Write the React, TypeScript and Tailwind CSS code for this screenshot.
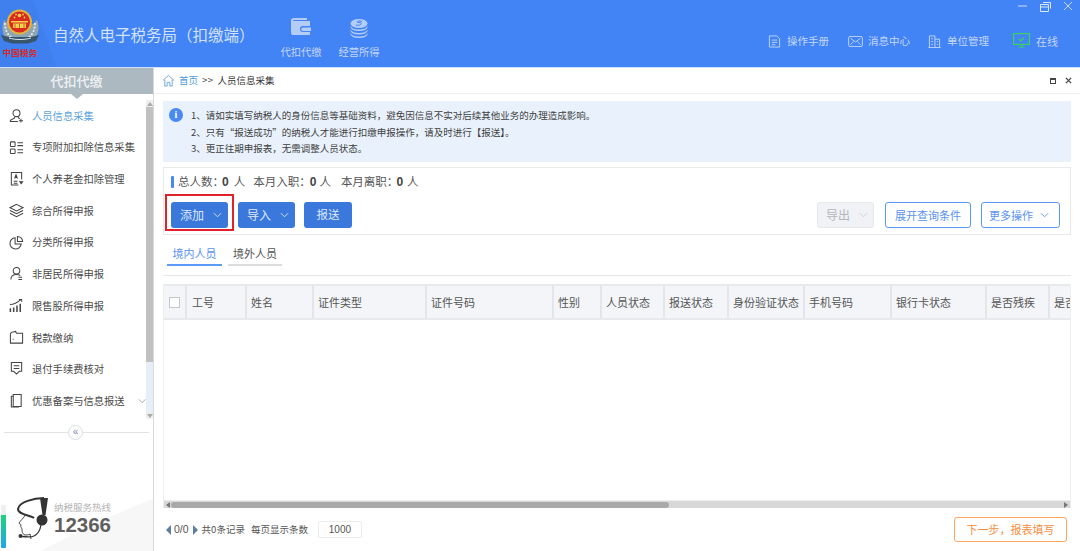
import React from "react";

const sideIcons: Record<string, React.ReactNode> = {
  user: <><circle cx="8" cy="5.500" r="3.700" /><path d="M6 9v1.500L1.500 13v1.500h8M10 9v1.500l1.500 1M10.500 13.500h4.500M12.700 11.500v4" /></>,
  list: <><rect x="1.500" y="2" width="5" height="5" rx="1" /><rect x="1.500" y="9.500" width="5" height="5" rx="1" /><path d="M9 3h6M9 6h6M9 10.500h6M9 13.500h6" /></>,
  pension: <><path d="M10 15H2.500V1.500h11V9" /><path d="M6 8l1.500-4L9 8M6.500 7h2M5 11h4M5 13h4" /><path d="M11.500 11.500l1.500 2 1.500-2z" fill="#444" /></>,
  layers: <><path d="M8 1.500l7 3.500-7 3.500L1 5z" /><path d="M1 8l7 3.500L15 8M1 11l7 3.500 7-3.500" /></>,
  pie: <><path d="M6.500 3a6 6 0 1 0 6.500 6.500H6.500z" /><path d="M9 1.500a5.500 5.500 0 0 1 5.500 5.500H9z" /></>,
  person: <><circle cx="8" cy="5" r="3.500" /><path d="M2 14.500c0-4 2.500-5.500 6-5.500 1.500 0 3 .3 4 1.200M10 14.500h4M10 12h4" /></>,
  chart: <><path d="M1.500 11v4M5 10v5M8.500 8v7M12 6v9" strokeWidth="1.600" /><path d="M1 7c4 0 8-2 12-5.500M10.500 1.500H13.500V4" /></>,
  wallet: <><path d="M1.500 14V4l1-1.500 4.500-1 1 2h6.500V14z" /><path d="M4 10h.8" /></>,
  check: <><path d="M2.500 1.500h11V11H11l-3 3-3-3H2.500z" /><path d="M5 5h6M5 8h6" /></>,
  copy: <><path d="M4.500 1.500h8.500v13H4.500z" /><path d="M4.500 3.500H2.500v11.500h8" /></>,
};

const menu: [string, string][] = [
  ["user", "人员信息采集"],
  ["list", "专项附加扣除信息采集"],
  ["pension", "个人养老金扣除管理"],
  ["layers", "综合所得申报"],
  ["pie", "分类所得申报"],
  ["person", "非居民所得申报"],
  ["chart", "限售股所得申报"],
  ["wallet", "税款缴纳"],
  ["check", "退付手续费核对"],
  ["copy", "优惠备案与信息报送"],
];

const cols: [string, string][] = [
  ["w-[60px] pl-[5px]", "工号"],
  ["w-[67px] pl-[4px]", "姓名"],
  ["w-[113px] pl-[4px]", "证件类型"],
  ["w-[127px] pl-[4px]", "证件号码"],
  ["w-[48px] pl-[4px]", "性别"],
  ["w-[63px] pl-[4px]", "人员状态"],
  ["w-[64px] pl-[4px]", "报送状态"],
  ["w-[76px] pl-[4px]", "身份验证状态"],
  ["w-[87px] pl-[4px]", "手机号码"],
  ["w-[95px] pl-[4px]", "银行卡状态"],
  ["w-[63px] pl-[4px]", "是否残疾"],
];

function Chevron({ className = "" }: { className?: string }) {
  return (
    <svg viewBox="0 0 10 6" className={`w-[9px] h-[6px] ${className}`} fill="none" stroke="currentColor" strokeWidth="1">
      <path d="M1 1l4 4 4-4" />
    </svg>
  );
}

function Logo() {
  return (
    <div className="w-[40px] h-[60px] flex flex-col items-center shrink-0">
      <svg viewBox="0 0 40 36" className="w-[40px] h-[36px]">
        <path d="M4 12C1 20 3 27 6 31c3 3 26 3 29 0 3-4 5-11 2-19l-4 4H8z" fill="#8fa5b2" />
        <path d="M5 15c0 6 2 11 6 14M35 15c0 6-2 11-6 14" stroke="#e3eaee" strokeWidth="1.800" fill="none" strokeDasharray="2 1.500" />
        <path d="M1 27l8 2h22l8-2-3 6-8 2.500H12L4 33z" fill="#37566c" />
        <path d="M9 30c6 2 16 2 22 0" stroke="#d9e3e8" strokeWidth="1" fill="none" />
        <circle cx="19.500" cy="14" r="12.500" fill="#e2b53c" />
        <circle cx="19.500" cy="14" r="10.500" fill="#d92a20" />
        <circle cx="19.500" cy="7.500" r="1.800" fill="#f3d34a" />
        <circle cx="14.500" cy="9.500" r=".9" fill="#f3d34a" />
        <circle cx="24.500" cy="9.500" r=".9" fill="#f3d34a" />
        <circle cx="16" cy="6.500" r=".9" fill="#f3d34a" />
        <circle cx="23" cy="6.500" r=".9" fill="#f3d34a" />
        <path d="M11 13h17v1.600H11zM13 15.500h13V20H13z" fill="#f3d34a" />
        <path d="M15 16v4M19.500 16v4M24 16v4" stroke="#d92a20" strokeWidth=".7" />
      </svg>
      <span className="text-[8.500px] font-bold leading-[12px] mt-[2px] text-[#d22a26] tracking-[0.3px] whitespace-nowrap">中国税务</span>
    </div>
  );
}

function TopItem({ icon, label, gap, w }: { icon: React.ReactNode; label: string; gap: string; w: string }) {
  return (
    <div className={`flex items-center ${w} ${gap} text-[10.500px] text-[#c3d6f6] shrink-0`}>
      {icon}
      <span className="whitespace-nowrap">{label}</span>
    </div>
  );
}

const zero = "text-[12px] font-bold text-[#444] [font-family:'Liberation_Sans',sans-serif]";

export default function App() {
  return (
    <div className="w-[1080px] h-[551px] overflow-hidden bg-white flex flex-col text-[#555] [font-family:'Noto_Sans_CJK_SC','Liberation_Sans',sans-serif]">
      <header className="relative h-[67px] shrink-0 bg-[#4284f5] flex items-start">
        <svg viewBox="0 0 56 67" className="absolute left-0 top-0 w-[56px] h-[67px]" fill="#3f80ee"><path d="M0 0h33l23 67H0z" /></svg>
        <div className="relative pt-[8px]"><Logo /></div>
        <div className="relative ml-[13px] mt-[23px] w-[198px] text-[15.500px] leading-[22px] text-[#d3e1f9] whitespace-nowrap">自然人电子税务局（扣缴端）</div>
        <div className="ml-[29px] mt-[17px] w-[42px] flex flex-col items-center text-[#c3d6f6]">
          <svg viewBox="0 0 22 20" className="w-[22px] h-[20px]" fill="#b4cdf6">
            <path d="M1 3.500C1 2 2 1 4 1h13v2H4c-.8 0-1 .3-1 .500 0 .3.300.500 1 .500h16v5h-7a3 3 0 0 0 0 6h7v3H3a2 2 0 0 1-2-2z" />
            <path d="M13 10.500h8v3.500h-8a1.700 1.700 0 0 1 0-3.500z" />
          </svg>
          <span className="text-[10.300px] leading-[14px] mt-[8px] whitespace-nowrap">代扣代缴</span>
        </div>
        <div className="ml-[16px] mt-[18px] w-[42px] flex flex-col items-center text-[#c3d6f6]">
          <svg viewBox="0 0 20 20" className="w-[20px] h-[20px]" fill="#b4cdf6">
            <ellipse cx="10" cy="5.500" rx="8.500" ry="4.500" />
            <path d="M1.500 8c1 2.500 4 3.500 8.500 3.500S17.500 10.500 18.500 8v1.500c-1 2.500-4 3.500-8.500 3.500S2.500 12 1.500 9.500zM1.500 11.500c1 2.500 4 3.500 8.500 3.500s7.500-1 8.500-3.500V13c-1 2.500-4 3.500-8.500 3.500S2.500 15.500 1.500 13zM1.500 15c1 2.500 4 3.500 8.500 3.500s7.500-1 8.500-3.500v1.500c-1 2.500-4 3.500-8.500 3.500s-7.500-1-8.500-3.500z" />
            <path d="M7 7c3 1 6-.500 5-2-.5-1-3 0-4-1 0-1 2-1.500 5-.500" stroke="#4284f5" strokeWidth="1" fill="none" />
          </svg>
          <span className="text-[10.300px] leading-[14px] mt-[7px] whitespace-nowrap">经营所得</span>
        </div>
        <div className="ml-auto mt-[33px] mr-[22px] flex items-center">
          <TopItem w="w-[80px]" gap="gap-[6px]" label="操作手册" icon={
            <svg viewBox="0 0 14 14" className="w-[13px] h-[13px]" fill="none" stroke="#c3d6f6"><path d="M1.500 1h8L12.500 4v9h-11zM4 5.500h6M4 8h6M4 10.500h4" /></svg>
          } />
          <TopItem w="w-[79px]" gap="gap-[5px]" label="消息中心" icon={
            <svg viewBox="0 0 16 12" className="w-[15px] h-[11px]" fill="none" stroke="#c3d6f6"><rect x=".5" y=".5" width="15" height="11" rx="1.500" /><path d="M2.500 2.500L8 6.500l5.500-4M2.500 9.500l3.500-3.500M13.500 9.500L10 6" /></svg>
          } />
          <TopItem w="w-[86px]" gap="gap-[5px]" label="单位管理" icon={
            <svg viewBox="0 0 15 14" className="w-[15px] h-[13px]" fill="none" stroke="#c3d6f6"><path d="M1 13.500h13M2 13.500V1h6v12.500M8 4.500h5v9M4 4h2M4 7h2M4 10h2M10 7h1.500M10 10h1.500" /></svg>
          } />
          <div className="flex items-center gap-[6px] text-[11px] text-[#c3d6f6]">
            <svg viewBox="0 0 17 15" className="w-[17px] h-[15px] -mt-[1px]" fill="none" stroke="#37d35c" strokeWidth="1.200"><rect x=".6" y=".6" width="15.800" height="10.800" /><path d="M5.500 14h6M8.500 11.500V14" /><path d="M5.800 6l2 1.800 3.200-3" strokeWidth="1.400" /></svg>
            <span>在线</span>
          </div>
        </div>
        <div className="absolute right-[7px] top-0 flex items-center gap-[12px] h-[12px]">
          <svg viewBox="0 0 10 10" className="w-[10px] h-[10px]" stroke="#c9daf8"><path d="M0 5h9" /></svg>
          <svg viewBox="0 0 11 11" className="w-[11px] h-[11px]" fill="none" stroke="#dbe7fb"><path d="M.5 3.500h8v7h-8zM.5 6h8M3 1.500h7.500v6" /></svg>
          <svg viewBox="0 0 10 10" className="w-[10px] h-[10px]" fill="none" stroke="#c9daf8"><path d="M1 1l8 8M9 1l-8 8" /></svg>
        </div>
      </header>

      <div className="h-[1px] bg-[#cfe0fb] shrink-0" />

      <div className="flex flex-1 min-h-0">
        <aside className="relative w-[154px] shrink-0 border-r border-[#d9d9d9] flex flex-col bg-white overflow-hidden">
          <div className="relative h-[26px] shrink-0 bg-[#adb9c1] text-center text-[13px] leading-[25px] font-medium text-[#eef2f4]">
            代扣代缴
            <span className="absolute left-1/2 -translate-x-1/2 top-[26px] w-0 h-0 border-x-[6px] border-x-transparent border-t-[5px] border-t-[#adb9c1]" />
          </div>
          <div className="flex h-[338px] shrink-0">
            <ul className="w-[146px] shrink-0 pt-[5.600px]">
              {menu.map(([icon, label], i) => (
                <li key={label} className={`h-[31.700px] flex items-center pl-[9px] text-[10.300px] whitespace-nowrap ${i === 0 ? "text-[#5ba3d9]" : "text-[#4a4a4a]"}`}>
                  <svg viewBox="0 0 16 16" className="w-[15px] h-[15px] shrink-0" fill="none" stroke="#444" strokeWidth="1.100">{sideIcons[icon]}</svg>
                  <span className="ml-[8px]">{label}</span>
                  {i === 9 && <Chevron className="ml-[13px] text-[#999]" />}
                </li>
              ))}
            </ul>
            <div className="w-[7px] shrink-0 mt-[6px] h-[319px] bg-[#e6eef8] flex flex-col">
              <div className="h-[7px] bg-[#eeeeee] flex items-center justify-center"><span className="w-0 h-0 border-x-[3px] border-x-transparent border-b-[4px] border-b-[#aaa]" /></div>
              <div className="h-[255px] bg-[#c1c1c1]" />
              <div className="flex-1" />
              <div className="h-[7px] bg-[#eeeeee] flex items-center justify-center"><span className="w-0 h-0 border-x-[3px] border-x-transparent border-t-[4px] border-t-[#aaa]" /></div>
            </div>
          </div>
          <div className="relative h-[1px] mx-[4px] bg-[#e3e3e3] shrink-0">
            <span className="absolute left-[64px] -top-[7px] w-[15px] h-[15px] rounded-full bg-white border border-[#dcdce8] text-[#7a86b8] text-[10px] leading-[12px] text-center [font-family:'Liberation_Sans',sans-serif]">«</span>
          </div>
          <div className="mt-auto relative h-[52px] flex items-start">
            <svg viewBox="0 0 153 70" className="absolute left-0 bottom-0 w-[153px] h-[70px]" fill="#f7f7f8"><path d="M40 70C80 50 120 30 153 18V70z" /></svg>
            <div className="relative mt-[6px] ml-[1px] w-[5px] h-[43px] rounded-[1px] bg-[linear-gradient(to_bottom,#f0f0f0_0%,#eeeeee_22%,#1fd27a_24%,#1ba7ee_100%)] shrink-0" />
            <svg viewBox="15 0 35 52" className="relative ml-[9px] -mt-[4px] w-[35px] h-[52px] shrink-0">
              <path d="M44 3C34 3 19 7 18 14c0 6 13 6 16 9" fill="none" stroke="#333" strokeWidth="2" />
              <path d="M25 20c-1 3-5 6-6 8 0 1 2 1 2 2-1 2 1 3 1 4 0 2 0 5 3 6 1 0 4 0 5-1l1 5" fill="none" stroke="#444" strokeWidth="1" />
              <path d="M40 3h8l-2.500 17h-3z" fill="#333" />
              <circle cx="42" cy="25" r="5.500" fill="#333" />
              <path d="M41 30c-1 6-3 9-7 11-3 1.500-8 1-12 .500" fill="none" stroke="#333" strokeWidth="1.300" />
              <circle cx="20.500" cy="41" r="2" fill="#333" />
            </svg>
            <div className="relative ml-[4px] mt-[1px] flex flex-col">
              <span className="text-[9.500px] leading-[14px] text-[#b3b3b3] whitespace-nowrap">纳税服务热线</span>
              <span className="text-[20.500px] leading-[21px] font-bold text-[#5f5f5f] [font-family:'Liberation_Sans',sans-serif]">12366</span>
            </div>
          </div>
        </aside>

        <main className="flex-1 min-w-0 flex flex-col">
          <div className="h-[26px] shrink-0 flex items-center border-b border-[#f1f1f1] pl-[8px] pr-[8px] text-[9.500px]">
            <svg viewBox="0 0 14 14" className="w-[13px] h-[13px]" fill="none" stroke="#6aa5d8"><path d="M1 7l6-5.500L13 7M3 6v7h2.500V9h3v4H11V6" /></svg>
            <span className="ml-[4px] text-[#4a9ad4]">首页</span>
            <span className="ml-[4px] text-[#444] tracking-[0.500px]">&gt;&gt;</span>
            <span className="ml-[4px] text-[#333]">人员信息采集</span>
            <div className="ml-auto flex items-center gap-[9px]">
              <span className="w-[6px] h-[6px] border border-[#444] border-t-2" />
              <svg viewBox="0 0 8 8" className="w-[7px] h-[7px]" stroke="#444" strokeWidth="1.500"><path d="M1 1l6 6M7 1L1 7" /></svg>
            </div>
          </div>

          <div className="flex-1 min-h-0 flex flex-col pl-[9px] pr-[9px]">
            <div className="mt-[7px] h-[61px] shrink-0 bg-[#e9f2fc] flex pl-[6px] pt-[7px]">
              <span className="w-[14px] h-[14px] rounded-full bg-[#4a8af0] text-white text-[10px] leading-[14px] text-center font-bold [font-family:'Liberation_Serif',serif] shrink-0">i</span>
              <ol className="ml-[8px] -mt-[1px] text-[9.500px] leading-[16.500px] text-[#3f3f3f] whitespace-nowrap">
                <li>1、请如实填写纳税人的身份信息等基础资料，避免因信息不实对后续其他业务的办理造成影响。</li>
                <li>2、只有“报送成功”的纳税人才能进行扣缴申报操作，请及时进行【报送】。</li>
                <li>3、更正往期申报表，无需调整人员状态。</li>
              </ol>
            </div>

            <section className="mt-[5px] h-[68px] shrink-0 border border-[#e9e9e9] pl-[7px] pr-[10px] flex flex-col">
              <div className="h-[27px] flex items-center text-[11.500px] text-[#555] whitespace-nowrap">
                <span className="w-[3px] h-[12px] bg-[#4a8af0] rounded-[1px] mr-[4px]" />
                <span>总人数：</span><b className={`${zero} -ml-[2px] mr-[5px]`}>0</b><span>人</span>
                <span className="ml-[8px]">本月入职：</span><b className={`${zero} -ml-[1px] mr-[3px]`}>0</b><span>人</span>
                <span className="ml-[10px]">本月离职：</span><b className={`${zero} -ml-[2px] mr-[4px]`}>0</b><span>人</span>
              </div>
              <div className="mt-[7px] flex items-center text-[12px]">
                <div className="relative w-[57px] h-[26px] rounded-[3px] bg-[#3a78db] text-[#dfe9fa] flex items-center pl-[9px] gap-[9px]">
                  添加<Chevron />
                  <span className="absolute -left-[6px] -top-[8px] w-[69px] h-[37px] border-2 border-[#e2222a]" />
                </div>
                <div className="ml-[10px] w-[57px] h-[26px] rounded-[3px] bg-[#3a78db] text-[#dfe9fa] flex items-center pl-[9px] gap-[9px]">导入<Chevron /></div>
                <div className="ml-[9px] w-[48px] h-[26px] rounded-[3px] bg-[#3a78db] text-[#dfe9fa] flex items-center justify-center text-[11.500px]">报送</div>
                <div className="ml-auto w-[57px] h-[26px] rounded-[3px] bg-[#f0f2f5] border border-[#e6e8eb] text-[#b4b7bb] flex items-center pl-[8px] gap-[9px]">导出<Chevron className="text-[#ccc]" /></div>
                <div className="ml-[11px] w-[86px] h-[26px] rounded-[3px] border border-[#5c9af5] text-[#5b93ee] flex items-center justify-center text-[11px]">展开查询条件</div>
                <div className="ml-[10px] w-[79px] h-[26px] rounded-[3px] border border-[#5c9af5] text-[#5b93ee] flex items-center pl-[7px] gap-[7px] text-[11px]">更多操作<Chevron /></div>
              </div>
            </section>

            <div className="mt-[8px] h-[33px] shrink-0 border-b border-[#e6e6e6] flex pl-[4px] gap-[6px] text-[11px]">
              <div className="w-[55px] h-[23px] text-center leading-[21px] text-[#5b93ee] border-b-2 border-[#5c9af5]">境内人员</div>
              <div className="w-[54px] h-[23px] text-center leading-[21px] text-[#555] border-b-2 border-[#dcdcdc]">境外人员</div>
            </div>

            <div className="mt-[8px] flex-1 min-h-0 flex flex-col border-x border-[#eeeeee] overflow-hidden">
              <div className="h-[36px] shrink-0 flex bg-[#f3f5f9] border-y-2 border-[#e8e9ec] text-[11px] text-[#555] whitespace-nowrap">
                <div className="w-[23px] shrink-0 border-r-2 border-[#e3e5e8] flex items-center justify-center">
                  <span className="w-[11px] h-[11px] bg-white border border-[#c4c6c9]" />
                </div>
                {cols.map(([w, t]) => (
                  <div key={t} className={`${w} shrink-0 border-r-2 border-[#e3e5e8] flex items-center overflow-hidden`}>{t}</div>
                ))}
                <div className="flex-1 pl-[4px] flex items-center overflow-hidden">是否</div>
              </div>
              <div className="flex-1 min-h-0" />
              <div className="h-[8px] shrink-0 bg-[#d8d8d8] flex items-center border-t border-[#eeeeee]">
                <span className="ml-[2px] w-0 h-0 border-y-[3px] border-y-transparent border-r-[4px] border-r-[#777]" />
                <span className="ml-[1px] w-[498px] h-[6px] rounded-[3px] bg-[#a9a9a9]" />
                <span className="ml-auto mr-[2px] w-0 h-0 border-y-[3px] border-y-transparent border-l-[4px] border-l-[#777]" />
              </div>
            </div>

            <div className="h-[43px] shrink-0 flex items-center pl-[3px] pr-[4px] text-[9.500px] text-[#555] whitespace-nowrap">
              <span className="w-0 h-0 border-y-[5px] border-y-transparent border-r-[5px] border-r-[#5f7f9e]" />
              <span className="ml-[3px] text-[10.500px] [font-family:'Liberation_Sans',sans-serif]">0/0</span>
              <span className="ml-[4px] w-0 h-0 border-y-[5px] border-y-transparent border-l-[5px] border-l-[#5f7f9e]" />
              <span className="ml-[4px]">共0条记录</span>
              <span className="ml-[6px]">每页显示条数</span>
              <span className="ml-[10px] w-[44px] h-[17px] border border-[#ececec] rounded-[2px] text-center text-[10px] leading-[15px] [font-family:'Liberation_Sans',sans-serif]">1000</span>
              <span className="ml-auto w-[113px] h-[25px] rounded-[3px] border border-[#ffa45c] text-[#f98d3f] text-[11px] flex items-center justify-center">下一步，报表填写</span>
            </div>
          </div>
        </main>
      </div>
    </div>
  );
}
